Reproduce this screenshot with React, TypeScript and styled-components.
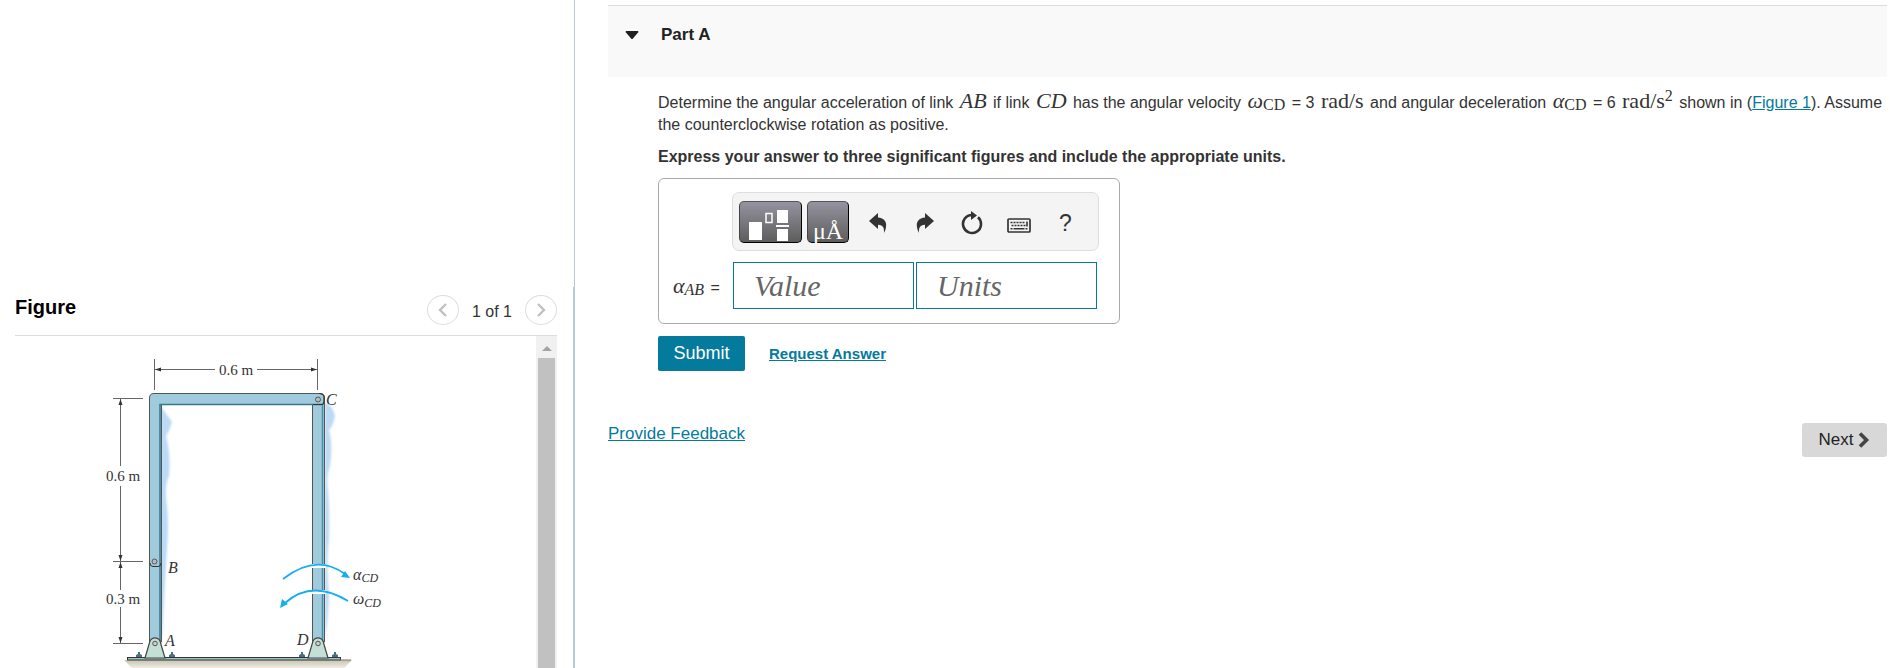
import React from "react";
import styled, { createGlobalStyle } from "styled-components";

const teal = "#047a9c";
const sans = `"Liberation Sans", Arial, sans-serif`;
const serif = `"Liberation Serif", "Times New Roman", serif`;

const GlobalStyle = createGlobalStyle`
  *, *::before, *::after { box-sizing: border-box; }
  body { margin: 0; background: #fff; color: #333; font-family: ${sans}; font-size: 16px; }
  button, input { font-family: inherit; }
  h1, h2, p { margin: 0; }
`;

const Page = styled.div`
  display: grid;
  grid-template-columns: 575px minmax(0, 1fr);
  height: 100vh;
  overflow: hidden;
`;

/* Left column: the figure panel */
const FigureColumn = styled.aside`
  display: flex;
  flex-direction: column;
  min-height: 0;
  padding-top: 287px;
  border-right: 1px solid #b5c9df;
`;

const FigurePanel = styled.section`
  display: flex;
  flex: 1;
  flex-direction: column;
  min-height: 0;
  padding: 0 16px 0 15px;
  border-right: 1px solid #b5c9df;
`;

const FigureHeader = styled.header`
  display: flex;
  align-items: center;
  justify-content: space-between;
  height: 49px;
  padding-bottom: 3px;
  border-bottom: 1px solid #ddd;
`;

const FigureTitle = styled.h2`
  padding-bottom: 6px;
  color: #000;
  font-size: 20px;
  line-height: 24px;
`;

const Pager = styled.nav`
  display: flex;
  align-items: center;
  gap: 13px;
  color: #333;
`;

const PagerLabel = styled.span`
  padding-top: 4px;
  line-height: 20px;
`;

const PagerButton = styled.button`
  display: flex;
  align-items: center;
  justify-content: center;
  width: 32px;
  height: 30px;
  padding: 0;
  border: 1px solid #ddd;
  border-radius: 50%;
  background: #fff;
`;

const FigureBody = styled.div`
  display: flex;
  flex: 1;
  min-height: 0;
  overflow: hidden;
`;

const FigureCanvas = styled.div`
  flex: 1;
  min-width: 0;
  overflow: hidden;
`;

const ScrollTrack = styled.div`
  display: flex;
  flex-direction: column;
  align-items: center;
  width: 21px;
  background: #f1f1f1;
`;

const ScrollArrow = styled.div`
  width: 0;
  margin: 10px 0 7px;
  border: 5px solid transparent;
  border-top: 0;
  border-bottom-color: #a3a3a3;
`;

const ScrollThumb = styled.div`
  flex: 1;
  width: 17px;
  background: #c1c1c1;
`;

/* Right column: the question */
const Main = styled.main`
  padding: 5px 3px 0 33px;
`;

const PartHeader = styled.header`
  display: flex;
  height: 72px;
  padding: 18px 17px;
  border-top: 1px solid #ddd;
  background: #f9f9f9;
`;

const PartToggle = styled.button`
  display: flex;
  align-items: center;
  gap: 22px;
  height: 22px;
  padding: 0;
  border: 0;
  background: none;
  color: #222;
  font-size: 17px;
  font-weight: bold;
  line-height: 22px;
`;

const Question = styled.div`
  padding: 14px 0 0 50px;
`;

const Prompt = styled.p`
  font-size: 16px;
  line-height: 22px;
`;

const Instruction = styled.p`
  padding-top: 10px;
  font-size: 16px;
  font-weight: bold;
  line-height: 22px;
`;

const Math = styled.span<{ $upright?: boolean }>`
  margin: 0 2px;
  font-family: ${serif};
  font-size: 22px;
  font-style: ${(p) => (p.$upright ? "normal" : "italic")};
  line-height: 20px;
`;

const Sub = styled.sub<{ $upright?: boolean }>`
  font-size: 16px;
  font-style: ${(p) => (p.$upright ? "normal" : "italic")};
  line-height: 16px;
  vertical-align: -2px;
`;

const Sup = styled.sup`
  font-size: 16px;
  line-height: 0;
  vertical-align: 7px;
`;

const Link = styled.a<{ $size?: number; $bold?: boolean }>`
  color: ${teal};
  font-size: ${(p) => p.$size ?? 16}px;
  font-weight: ${(p) => (p.$bold ? "bold" : "normal")};
`;

const AnswerBox = styled.form`
  width: 462px;
  margin-top: 10px;
  padding: 13px 20px 14px 12px;
  border: 1px solid #aaa;
  border-radius: 6px;
`;

const Toolbar = styled.div`
  display: flex;
  align-items: center;
  width: 367px;
  height: 59px;
  margin-left: 61px;
  padding: 0 6px;
  border: 1px solid #ddd;
  border-radius: 7px;
  background: #f4f4f4;
`;

const PaletteButton = styled.button<{ $wide?: boolean }>`
  display: flex;
  align-items: flex-end;
  justify-content: center;
  width: ${(p) => (p.$wide ? 63 : 42)}px;
  height: 42px;
  margin-right: 5px;
  padding: 0;
  border: 1px solid #000;
  border-top-color: #555;
  border-left-color: #444;
  border-radius: 5px;
  background: linear-gradient(#95939f, #5d5d5d);
  color: #fff;
  font-family: ${serif};
  font-size: 24px;
  line-height: 22px;
`;

const ToolButton = styled.button`
  display: flex;
  align-items: center;
  justify-content: center;
  width: 47px;
  height: 42px;
  padding: 3px 0 0;
  border: 0;
  background: none;
  color: #333;
  font-size: 23px;
`;

const AnswerRow = styled.div`
  display: flex;
  align-items: center;
  gap: 2px;
  padding-top: 11px;
`;

const AnswerLabel = styled.label`
  width: 60px;
  padding-top: 3px;
  line-height: 22px;
  white-space: nowrap;
`;

const AnswerInput = styled.input`
  width: 181px;
  height: 47px;
  padding: 0 20px;
  border: 1px solid ${teal};
  border-radius: 0;
  font-family: ${serif};
  font-size: 30px;
  font-style: italic;
  &::placeholder { color: #666; opacity: 1; }
`;

const Actions = styled.div`
  display: flex;
  align-items: center;
  gap: 24px;
  padding-top: 12px;
`;

const SubmitButton = styled.button`
  width: 87px;
  height: 35px;
  padding: 0;
  border: 0;
  border-radius: 2px;
  background: ${teal};
  color: #fff;
  font-size: 18px;
`;

const Footer = styled.footer`
  display: flex;
  align-items: flex-start;
  justify-content: space-between;
  padding-top: 52px;
  line-height: 22px;
`;

const NextButton = styled.button`
  display: flex;
  align-items: center;
  justify-content: center;
  gap: 5px;
  width: 85px;
  height: 34px;
  padding: 0;
  border: 0;
  border-radius: 3px;
  background: #d8d8d8;
  color: #222;
  font-size: 17px;
`;

const Chevron = ({ flip = false }) => (
  <svg width="12" height="16" viewBox="0 0 12 16" aria-hidden="true">
    <path d={flip ? "M3 2l6 6-6 6" : "M9 2L3 8l6 6"} fill="none" stroke="#c0c0c0" strokeWidth="2.400" />
  </svg>
);

const Bolt = ({ x }: { x: number }) => (
  <path d={`M${x - 3} 657v-2l2-1v-2h2v2l2 1v2z`} fill="#4b6f80" />
);

const Bracket = ({ x }: { x: number }) => (
  <g>
    <path d={`M${x - 10} 658l5 -17a5.500 5.500 0 0 1 10 0l5 17z`} fill="#c3dfd6" stroke="#444" strokeWidth="1.200" />
    <circle cx={x} cy="643.500" r="2.300" fill="#ccc" stroke="#555" />
    <Bolt x={x - 16} />
    <Bolt x={x + 17} />
  </g>
);

const Linkage = () => (
  <svg width="521" height="332" viewBox="15 336 521 332" role="img" aria-label="Linkage ABCD">
    <defs>
      <linearGradient id="ground" x1="0" y1="0" x2="0" y2="1">
        <stop offset="0" stopColor="#c9c4b0" />
        <stop offset="1" stopColor="#efede5" />
      </linearGradient>
      <filter id="soft" x="-50%" y="-5%" width="200%" height="110%">
        <feGaussianBlur stdDeviation="1.200" />
      </filter>
    </defs>

    <g fill="#bcdaf5" filter="url(#soft)">
      <path d="M161 406q5 8 11 16q-2 8-6 14q5 18 3 40q-5 10-2 30q2 20 0 42l-5 88h-2z" />
      <path d="M325 402q8 4 10 14q-2 10-6 14q4 14 1 36q-4 10-2 24q2 20 1 50q-3 20 0 54q-1 30-4 42z" />
    </g>

    <path d="M124 660h228l-8 8H132z" fill="url(#ground)" />
    <rect x="127.500" y="657.500" width="213" height="2.500" fill="#9ec4c5" stroke="#333" />
    <path d="M340 660h11" stroke="#777" />

    <path d="M149.500 642V398q0-4.500 4.500-4.500h166q4.500 0 4.500 4.500V642h-12V404.500H161.500V642z" fill="#a0cbdd" stroke="#555" />
    <path d="M160 641V404.500H323" fill="none" stroke="#34788f" strokeWidth="1.500" />
    <path d="M322.500 404v237" stroke="#4a8da4" strokeWidth="1.500" />
    <path d="M313 404.500h9q2 0 2-5v-3q-1-3-5-3" fill="none" stroke="#333" strokeWidth="1.200" />
    <path d="M150 563q0 3.500 3 3.500h5q3 0 3-3.500" fill="none" stroke="#333" />
    <g fill="#bbb" stroke="#555">
      <circle cx="318" cy="399.500" r="2.500" />
      <circle cx="154.500" cy="561.500" r="2.500" />
    </g>
    <Bracket x={155} />
    <Bracket x={318} />

    <g stroke="#666" fill="none">
      <path d="M154.500 359v31M317.500 359v31M155 369.500h60M257 369.500h60" />
      <path d="M113 398.500h30M113 561.500h30M113 643.500h30M120.500 399v67M120.500 486v104M120.500 607v36" />
    </g>
    <g fill="#333">
      <path d="M155 369.500l6-2v4zM317 369.500l-6-2v4z" />
      <path d="M120.500 399l-2 6h4zM120.500 561l-2-6h4zM120.500 562l-2 6h4zM120.500 643l-2-6h4z" />
    </g>

    <g fill="none" stroke="#fff" strokeWidth="4">
      <path d="M312 566h14M312 592h14" />
    </g>
    <g fill="none" stroke="#16aef0" strokeWidth="1.800">
      <path d="M283 579q33-26 62-5" />
      <path d="M348 601q-36-22-63 2" />
    </g>
    <path d="M350 578l-9-1 4-6zM280 608l2-9 6 5z" fill="#16aef0" />

    <g fill="#333" fontFamily="Liberation Serif, serif" fontSize="15">
      <text x="219" y="375">0.6 m</text>
      <text x="106" y="481">0.6 m</text>
      <text x="106" y="604">0.3 m</text>
      <g fontStyle="italic" fontSize="16">
        <text x="326" y="405">C</text>
        <text x="168" y="573">B</text>
        <text x="165" y="646">A</text>
        <text x="297" y="645">D</text>
        <text x="353" y="580">α<tspan fontSize="12" dy="2">CD</tspan></text>
        <text x="353" y="604">ω<tspan fontSize="12" dy="3">CD</tspan></text>
      </g>
    </g>
  </svg>
);

const TemplateIcon = () => (
  <svg width="61" height="40" viewBox="0 0 61 40" aria-hidden="true">
    <path d="M9 20h13v18H9zM37 8h11v13H37zM37 27h11v12H37zM36 23h13v2H36z" fill="#fff" />
    <path d="M26 11.500h6v9h-6z" fill="none" stroke="#fff" strokeWidth="1.500" />
  </svg>
);

const UndoIcon = ({ flip = false }) => (
  <svg width="18" height="20" viewBox="0 0 18 20" aria-hidden="true">
    <path
      transform={flip ? "translate(18 0) scale(-1 1)" : undefined}
      d="M0 8L9 0v4.500c6 .5 9 4 8 9.500-.3 2.500-1 4-2 6 .3-5-.5-8-6-8.300V16z"
      fill="#333"
    />
  </svg>
);

const ResetIcon = () => (
  <svg width="22" height="24" viewBox="0 0 22 24" aria-hidden="true">
    <path d="M11 4a9 9 0 1 0 6 2.300" fill="none" stroke="#333" strokeWidth="2.600" />
    <path d="M10 0l6 4.500-6 4.500z" fill="#333" />
  </svg>
);

const KeyboardIcon = () => (
  <svg width="24" height="20" viewBox="0 0 24 20" aria-hidden="true">
    <g transform="translate(0 5)">
      <rect x="1" y="1" width="22" height="13" rx="1" fill="none" stroke="#333" strokeWidth="1.700" />
      <path d="M3.500 4.500h15M4.500 7.500h14" stroke="#333" strokeWidth="1.700" strokeDasharray="2 1" />
      <path d="M3.500 10.700h2M6.500 10.700h11M18.500 10.700h2M20 3.500v5" stroke="#333" strokeWidth="1.600" />
    </g>
  </svg>
);

export default function App() {
  return (
    <>
      <GlobalStyle />
      <Page>
        <FigureColumn>
          <FigurePanel>
            <FigureHeader>
              <FigureTitle>Figure</FigureTitle>
              <Pager aria-label="Figures">
                <PagerButton type="button" aria-label="Previous figure"><Chevron /></PagerButton>
                <PagerLabel>1 of 1</PagerLabel>
                <PagerButton type="button" aria-label="Next figure"><Chevron flip /></PagerButton>
              </Pager>
            </FigureHeader>
            <FigureBody>
              <FigureCanvas><Linkage /></FigureCanvas>
              <ScrollTrack><ScrollArrow /><ScrollThumb /></ScrollTrack>
            </FigureBody>
          </FigurePanel>
        </FigureColumn>

        <Main>
          <PartHeader>
            <PartToggle type="button" aria-expanded="true">
              <svg width="14" height="8" viewBox="0 0 14 8" aria-hidden="true">
                <path d="M1 0h12l.5 1L7.500 8h-1L.5 1z" fill="#222" />
              </svg>
              Part A
            </PartToggle>
          </PartHeader>

          <Question>
            <Prompt>
              Determine the angular acceleration of link <Math>AB</Math> if link <Math>CD</Math> has the angular
              velocity <Math>ω<Sub $upright>CD</Sub></Math> = 3 <Math $upright>rad/s</Math> and angular
              deceleration <Math>α<Sub $upright>CD</Sub></Math> = 6 <Math $upright>rad/s<Sup>2</Sup></Math> shown
              in (<Link href="#figure">Figure 1</Link>). Assume the counterclockwise rotation as positive.
            </Prompt>
            <Instruction>
              Express your answer to three significant figures and include the appropriate units.
            </Instruction>

            <AnswerBox>
              <Toolbar role="toolbar" aria-label="Math input">
                <PaletteButton type="button" $wide aria-label="Templates"><TemplateIcon /></PaletteButton>
                <PaletteButton type="button" aria-label="Symbols">μÅ</PaletteButton>
                <ToolButton type="button" aria-label="Undo"><UndoIcon /></ToolButton>
                <ToolButton type="button" aria-label="Redo"><UndoIcon flip /></ToolButton>
                <ToolButton type="button" aria-label="Reset"><ResetIcon /></ToolButton>
                <ToolButton type="button" aria-label="Keyboard shortcuts"><KeyboardIcon /></ToolButton>
                <ToolButton type="button" aria-label="Help">?</ToolButton>
              </Toolbar>
              <AnswerRow>
                <AnswerLabel htmlFor="value"><Math>α<Sub>AB</Sub></Math> =</AnswerLabel>
                <AnswerInput id="value" placeholder="Value" />
                <AnswerInput id="units" placeholder="Units" aria-label="Units" />
              </AnswerRow>
            </AnswerBox>

            <Actions>
              <SubmitButton type="submit">Submit</SubmitButton>
              <Link href="#answer" $size={15} $bold>Request Answer</Link>
            </Actions>
          </Question>

          <Footer>
            <Link href="#feedback" $size={17}>Provide Feedback</Link>
            <NextButton type="button">
              Next
              <svg width="12" height="16" viewBox="0 0 12 16" aria-hidden="true">
                <path d="M2 1.500L8.500 8 2 14.500" fill="none" stroke="#444" strokeWidth="3.600" />
              </svg>
            </NextButton>
          </Footer>
        </Main>
      </Page>
    </>
  );
}
